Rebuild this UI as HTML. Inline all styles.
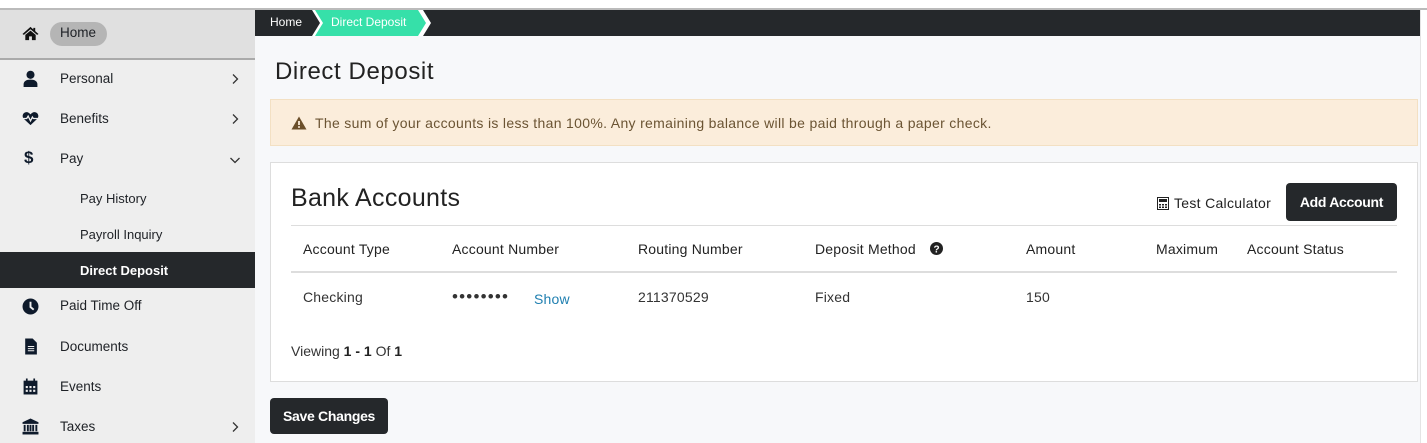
<!DOCTYPE html>
<html><head><style>
*{box-sizing:border-box;margin:0;padding:0}
body{width:1427px;height:443px;overflow:hidden;background:#fff;font-family:"Liberation Sans",sans-serif;color:#222;position:relative}
.abs{position:absolute}
#side{left:0;top:8px;width:255px;height:435px;background:#eeeeee;border-top:2px solid #bbb}
#home{left:0;top:10px;width:255px;height:50px;background:#e0e0e0;border-bottom:2px solid #aaa}
.item{position:absolute;left:60px;font-size:13.5px;color:#1e2126}
.ic{position:absolute;left:22px;width:17px;height:17px}
.chev{position:absolute;left:230px;width:10px;height:10px}
#main{left:255px;top:10px;width:1165px;height:433px;background:#f7f8fa}
#bc{left:255px;top:10px;width:1165px;height:26px;background:#25282b}
</style></head><body>
<div class="abs" style="left:0;top:8px;width:1427px;height:2px;background:#bbb"></div>
<div class="abs" id="side"></div>
<div class="abs" id="home"></div>
<svg class="ic" style="top:25px" viewBox="0 0 18 16"><path d="M9 1L0.5 8.5 2 9.5 9 3.5 16 9.5 17.5 8.5 14 5.5V2h-2v1.8z M3.5 9.5V15h4v-4h3v4h4V9.5L9 5z" fill="#111"/></svg>
<div class="abs" style="left:50px;top:22px;width:57px;height:24px;border-radius:12px;background:#b5b5b5"></div>
<div class="item" style="top:25px">Home</div>

<svg class="ic" style="top:70px" viewBox="0 0 16 16"><circle cx="8" cy="4.5" r="3.8" fill="#0e1a2b"/><path d="M1.5 16v-2.5c0-3 2.5-4.5 6.5-4.5s6.5 1.5 6.5 4.5V16z" fill="#0e1a2b"/></svg>
<div class="item" style="top:71px">Personal</div>
<svg class="chev" style="top:74px" viewBox="0 0 10 10"><path d="M3 0.5L7.5 5 3 9.5" stroke="#333" stroke-width="1.3" fill="none"/></svg>

<svg class="ic" style="top:110px" viewBox="0 0 18 16"><path d="M9 15L1.8 8.2C-0.5 5.6 1 1.2 4.8 1.2 6.8 1.2 8 2.5 9 3.6 10 2.5 11.2 1.2 13.2 1.2 17 1.2 18.5 5.6 16.2 8.2z" fill="#0e1a2b"/><path d="M1 8h4l1.5-2.5 2.5 5 2-4 1 1.5h5" stroke="#eee" stroke-width="1.4" fill="none"/></svg>
<div class="item" style="top:111px">Benefits</div>
<svg class="chev" style="top:114px" viewBox="0 0 10 10"><path d="M3 0.5L7.5 5 3 9.5" stroke="#333" stroke-width="1.3" fill="none"/></svg>

<div class="abs" style="left:24px;top:148px;font-size:17px;font-weight:bold;color:#0e1a2b">$</div>
<div class="item" style="top:151px">Pay</div>
<svg class="chev" style="top:155px" viewBox="0 0 10 10"><path d="M0.5 3L5 7.5 9.5 3" stroke="#333" stroke-width="1.3" fill="none"/></svg>
<div class="item" style="left:80px;top:191px;font-size:13px">Pay History</div>
<div class="item" style="left:80px;top:227px;font-size:13px">Payroll Inquiry</div>
<div class="abs" style="left:0;top:252px;width:255px;height:36px;background:#25282b"></div>
<div class="item" style="left:80px;top:263px;font-size:13px;color:#fff;font-weight:bold">Direct Deposit</div>

<svg class="ic" style="top:298px" viewBox="0 0 16 16"><circle cx="8" cy="8" r="7.5" fill="#0e1a2b"/><path d="M8 3.5V8.5L11 11" stroke="#eee" stroke-width="1.8" fill="none"/></svg>
<div class="item" style="top:298px">Paid Time Off</div>
<svg class="ic" style="top:338px" viewBox="0 0 16 16"><path d="M3 0.5h7l4 4V15.5H3z" fill="#0e1a2b"/><path d="M5.5 8h6M5.5 10h6M5.5 12h6" stroke="#eee" stroke-width="1"/></svg>
<div class="item" style="top:339px">Documents</div>
<svg class="ic" style="top:378px" viewBox="0 0 16 16"><rect x="1.5" y="2.5" width="13" height="13" fill="#0e1a2b"/><path d="M4.5 0.5v3M11.5 0.5v3" stroke="#0e1a2b" stroke-width="1.6"/><path d="M3.5 7.5h2v2h-2zM7 7.5h2v2h-2zM10.5 7.5h2v2h-2zM3.5 11h2v2h-2zM7 11h2v2h-2zM10.5 11h2v2h-2z" fill="#eee"/></svg>
<div class="item" style="top:379px">Events</div>
<svg class="ic" style="top:418px" viewBox="0 0 16 16"><path d="M8 0.5L0.5 4v1.5h15V4z" fill="#0e1a2b"/><path d="M2.5 6.5v6M5.5 6.5v6M10.5 6.5v6M13.5 6.5v6M8 6.5v6" stroke="#0e1a2b" stroke-width="1.8"/><rect x="0.5" y="13" width="15" height="2.5" fill="#0e1a2b"/></svg>
<div class="item" style="top:419px">Taxes</div>
<svg class="chev" style="top:422px" viewBox="0 0 10 10"><path d="M3 0.5L7.5 5 3 9.5" stroke="#333" stroke-width="1.3" fill="none"/></svg>

<div class="abs" id="main"></div>
<div class="abs" style="left:1420px;top:10px;width:7px;height:433px;background:#fff;border-left:1px solid #e4e4e4"></div>
<div class="abs" id="bc"></div>
<svg class="abs" style="left:255px;top:10px" width="180" height="26"><path d="M57 0L65 13 57 26H168L176 13 168 0z" fill="#fff"/><path d="M60 0L68 13 60 26H163L171 13 163 0z" fill="#36e0a9"/></svg>
<div class="abs" style="left:270px;top:15px;font-size:12px;color:#fff">Home</div>
<div class="abs" style="left:331px;top:15px;font-size:12px;color:#fff">Direct Deposit</div>

<div class="abs" style="left:275px;top:58px;font-size:24px;letter-spacing:0.6px;color:#222">Direct Deposit</div>

<div class="abs" style="left:270px;top:99px;width:1148px;height:47px;background:#fbeddb;border:1px solid #f3e0c3"></div>
<svg class="abs" style="left:291px;top:116px" width="16" height="14" viewBox="0 0 16 14"><path d="M8 0.5L15.5 13.5H0.5z" fill="#6b4f2a"/><path d="M8 5v4" stroke="#fbeddb" stroke-width="1.8"/><circle cx="8" cy="11" r="1" fill="#fbeddb"/></svg>
<div class="abs" style="left:315px;top:115px;font-size:14px;letter-spacing:0.32px;color:#6b5433">The sum of your accounts is less than 100%. Any remaining balance will be paid through a paper check.</div>

<div class="abs" style="left:270px;top:162px;width:1148px;height:220px;background:#fff;border:1px solid #ddd"></div>
<div class="abs" style="left:291px;top:184px;font-size:25px;letter-spacing:0.3px;color:#222">Bank Accounts</div>
<svg class="abs" style="left:1157px;top:197px" width="12" height="13" viewBox="0 0 12 13"><rect x="0.5" y="0.5" width="11" height="12" fill="none" stroke="#222"/><rect x="2" y="2" width="8" height="3" fill="#222"/><path d="M2 7h2v1.5H2zM5 7h2v1.5H5zM8 7h2v1.5H8zM2 9.5h2V11H2zM5 9.5h2V11H5zM8 9.5h2V11H8z" fill="#222"/></svg>
<div class="abs" style="left:1174px;top:195px;font-size:14px;letter-spacing:0.3px;color:#222">Test Calculator</div>
<div class="abs" style="left:1286px;top:183px;width:111px;height:38px;background:#25282b;border-radius:4px;color:#fff;font-size:14px;font-weight:bold;letter-spacing:-0.3px;text-align:center;line-height:38px">Add Account</div>

<div class="abs" style="left:291px;top:225px;width:1106px;height:1px;background:#ddd"></div>
<div class="abs" style="left:291px;top:271px;width:1106px;height:2px;background:#ddd"></div>
<div class="abs" style="top:241px;left:0;font-size:14px;letter-spacing:0.2px;color:#222;width:1427px">
<span class="abs" style="left:303px">Account Type</span>
<span class="abs" style="left:452px">Account Number</span>
<span class="abs" style="left:638px">Routing Number</span>
<span class="abs" style="left:815px">Deposit Method</span>
<span class="abs" style="left:1026px">Amount</span>
<span class="abs" style="left:1156px">Maximum</span>
<span class="abs" style="left:1247px">Account Status</span>
</div>
<svg class="abs" style="left:930px;top:242px" width="13" height="13" viewBox="0 0 13 13"><circle cx="6.5" cy="6.5" r="6.5" fill="#222"/><text x="6.5" y="10.5" font-size="10" font-weight="bold" text-anchor="middle" fill="#fff" font-family="Liberation Sans">?</text></svg>
<div class="abs" style="top:289px;left:0;font-size:14px;letter-spacing:0.2px;color:#333;width:1427px">
<span class="abs" style="left:452px;top:-2px;font-size:17px;letter-spacing:1.2px">••••••••</span>
<span class="abs" style="left:303px">Checking</span>
<span class="abs" style="left:534px;top:2px;color:#1f7fb0">Show</span>
<span class="abs" style="left:638px">211370529</span>
<span class="abs" style="left:815px">Fixed</span>
<span class="abs" style="left:1026px">150</span>
</div>
<div class="abs" style="left:291px;top:343px;font-size:14px;color:#333">Viewing <b style="color:#222;font-weight:600">1 - 1</b> Of <b style="color:#222;font-weight:600">1</b></div>

<div class="abs" style="left:270px;top:398px;width:118px;height:36px;background:#25282b;border-radius:4px;color:#fff;font-size:14px;font-weight:bold;letter-spacing:-0.3px;text-align:center;line-height:36px">Save Changes</div>
</body></html>
